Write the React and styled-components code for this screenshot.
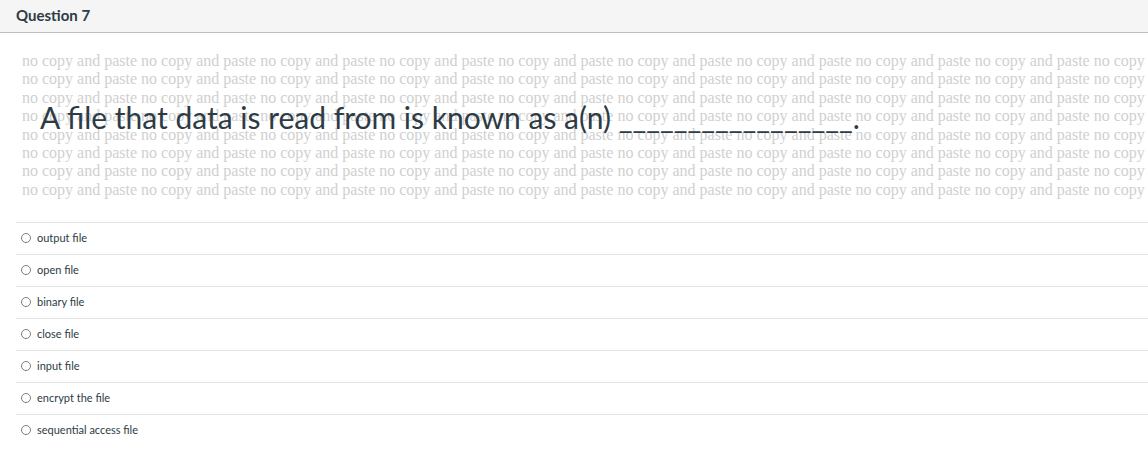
import styled, { createGlobalStyle } from "styled-components";

const GlobalStyle = createGlobalStyle`
  body {
    margin: 0;
    background: #fff;
    font-family: Lato, "Open Sans", sans-serif;
    color: #2d3b45;
  }
`;

const Header = styled.div`
  height: 32px;
  line-height: 31px;
  padding: 0 16px;
  background: #f5f5f5;
  border-bottom: 1px solid #b8bfc4;
  font-size: 15px;
  font-weight: 700;
`;

const Body = styled.div`
  padding: 19px 0 0 16px;
  overflow: hidden;
`;

const Watermark = styled.div`
  position: relative;
  margin-left: 6px;
  font-family: "Liberation Serif", serif;
  font-size: 16px;
  color: #d0d0d0;
  white-space: nowrap;
  overflow: hidden;
`;

const WatermarkLine = styled.div`
  line-height: 18.4px;
`;

const QuestionText = styled.p`
  position: absolute;
  top: 47px;
  left: 18px;
  margin: 0;
  font-family: Lato, sans-serif;
  font-size: 30px;
  line-height: 36px;
  color: #2d3b45;
  white-space: nowrap;
`;

const Answers = styled.ul`
  list-style: none;
  margin: 23px 0 0;
  padding: 0;
`;

const Answer = styled.li`
  display: flex;
  align-items: center;
  height: 32px;
  border-top: 1px solid #e2e4e6;
  padding: 0 0 2px 5px;
  font-size: 11px;
  box-sizing: border-box;
`;

const Radio = styled.span`
  width: 8px;
  height: 8px;
  border: 1px solid #79838a;
  border-radius: 50%;
  margin-right: 6px;
  flex-shrink: 0;
`;

const phrase = Array(9).fill("no copy and paste").join(" ") + " no copy";
const options = [
  "output file",
  "open file",
  "binary file",
  "close file",
  "input file",
  "encrypt the file",
  "sequential access file",
];

export default function App() {
  return (
    <>
      <GlobalStyle />
      <Header>Question 7</Header>
      <Body>
        <Watermark>
          {Array.from({ length: 8 }, (_, i) => (
            <WatermarkLine key={i}>{phrase}</WatermarkLine>
          ))}
          <QuestionText>
            A file that data is read from is known as a(n) _________________.
          </QuestionText>
        </Watermark>
        <Answers>
          {options.map((o) => (
            <Answer key={o}>
              <Radio />
              {o}
            </Answer>
          ))}
        </Answers>
      </Body>
    </>
  );
}
